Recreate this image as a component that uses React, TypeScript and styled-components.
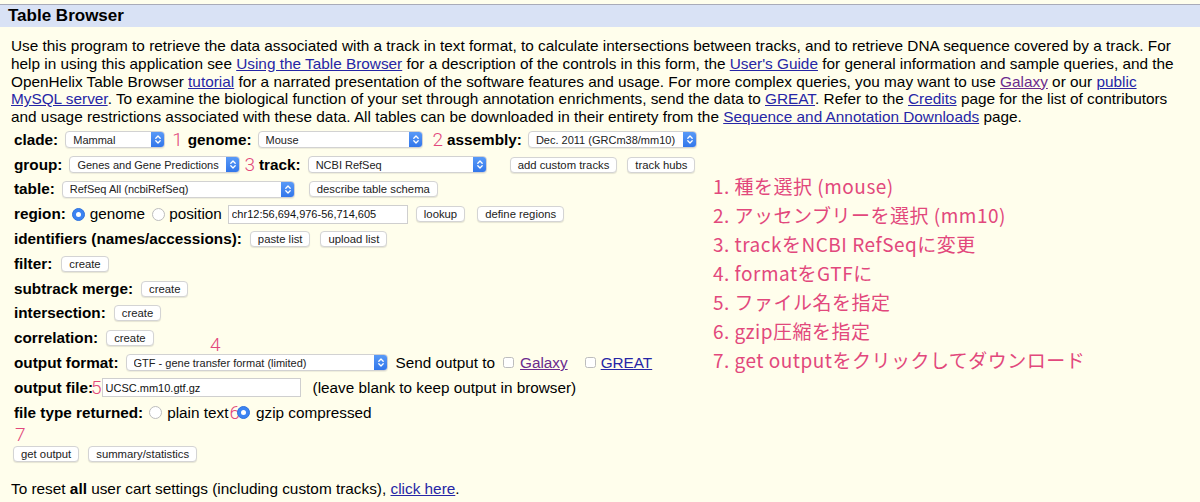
import React from 'react';
import styled, { createGlobalStyle } from 'styled-components';

const Global = createGlobalStyle`
  html, body { margin: 0; padding: 0; background: #fffeec; }
  body { font-family: "Liberation Sans", Arial, Helvetica, sans-serif; color: #000; }
`;

const Page = styled.div`
  width: 1200px;
  height: 502px;
  overflow: hidden;
  background: #fffeec;
`;

const TopRule = styled.div`
  height: 4px;
  border-bottom: 1px solid #a9abb8;
`;

const TitleBar = styled.div`
  height: 22px;
  background: #d9e2f5;
  display: flex;
  align-items: center;
  padding-left: 8px;
  font-weight: bold;
  font-size: 17px;
`;

const Intro = styled.div`
  margin-top: 10px;
  padding-left: 11px;
  font-size: 15.35px;
  line-height: 17.8px;
`;

const Line = styled.div`
  white-space: nowrap;
`;

const Link = styled.a<{ $visited?: boolean; $ml?: number }>`
  color: ${(p) => (p.$visited ? '#6a2b8e' : '#2626a6')};
  text-decoration: underline;
  margin-left: ${(p) => p.$ml ?? 0}px;
`;

const Main = styled.div`
  display: grid;
  grid-template-columns: 699px 1fr;
  padding-left: 14px;
  margin-top: 1.4px;
`;

const Form = styled.div`
  display: flex;
  flex-direction: column;
`;

const Row = styled.div<{ $h?: number }>`
  display: flex;
  align-items: center;
  height: ${(p) => p.$h ?? 24.8}px;
  white-space: nowrap;
  position: relative;
`;

const Label = styled.span<{ $ml?: number }>`
  font-weight: bold;
  font-size: 15.3px;
  margin-left: ${(p) => p.$ml ?? 0}px;
`;

const Text = styled.span<{ $ml?: number }>`
  font-size: 15.3px;
  margin-left: ${(p) => p.$ml ?? 0}px;
`;

const Num = styled.span<{ $ml?: number }>`
  color: #e2487c;
  font-family: Roboto, "Noto Sans", sans-serif;
  font-weight: 300;
  font-size: 19px;
  line-height: 20px;
  margin-left: ${(p) => p.$ml ?? 0}px;
`;

const FloatNum = styled(Num)`
  position: absolute;
  left: ${(p) => p.$ml ?? 0}px;
  top: -16px;
  margin-left: 0;
`;

const SelectBox = styled.div<{ $w: number; $ml?: number }>`
  width: ${(p) => p.$w}px;
  height: 17px;
  box-sizing: border-box;
  margin-left: ${(p) => p.$ml ?? 0}px;
  display: flex;
  align-items: center;
  background: #fff;
  border: 1px solid #d2d2d2;
  border-radius: 4px;
  box-shadow: 0 1px 1px rgba(0, 0, 0, 0.07);
  font-size: 11px;
  color: #222;
  padding-left: 7px;
  overflow: hidden;
`;

const SelectText = styled.span`
  flex: 1;
  overflow: hidden;
`;

const Chevron = styled.span`
  width: 14px;
  height: 17px;
  margin-right: -1px;
  background: linear-gradient(#5b9cf8, #2f74ea);
  border-radius: 0 4px 4px 0;
  display: flex;
  align-items: center;
  justify-content: center;
`;

const Btn = styled.button<{ $ml?: number }>`
  display: inline-flex;
  align-items: center;
  height: 16px;
  padding: 0 7px;
  margin: 0 0 0 ${(p) => p.$ml ?? 0}px;
  background: #fff;
  border: 1px solid #d4d4d4;
  border-radius: 4px;
  box-shadow: 0 1px 1px rgba(0, 0, 0, 0.1);
  font-family: "Liberation Sans", Arial, sans-serif;
  font-size: 11.3px;
  color: #222;
`;

const TextInput = styled.input<{ $w: number; $ml?: number }>`
  width: ${(p) => p.$w}px;
  height: 19px;
  box-sizing: border-box;
  margin: 0 0 0 ${(p) => p.$ml ?? 0}px;
  border: 1px solid #cfcfcf;
  background: #fff;
  font-family: "Liberation Sans", Arial, sans-serif;
  font-size: 11px;
  color: #111;
  padding: 0 3px;
  outline: none;
`;

const Radio = styled.span<{ $checked?: boolean; $ml?: number }>`
  width: 13px;
  height: 13px;
  box-sizing: border-box;
  border-radius: 50%;
  margin-left: ${(p) => p.$ml ?? 0}px;
  background: ${(p) => (p.$checked ? '#3b83f2' : '#fff')};
  border: 1px solid ${(p) => (p.$checked ? '#2f72dc' : '#bdbdbd')};
  display: inline-flex;
  align-items: center;
  justify-content: center;
  position: relative;
  &::after {
    content: '';
    width: 5px;
    height: 5px;
    border-radius: 50%;
    background: #fff;
    display: ${(p) => (p.$checked ? 'block' : 'none')};
  }
`;

const Check = styled.span<{ $ml?: number }>`
  width: 11px;
  height: 11px;
  box-sizing: border-box;
  border: 1px solid #bdbdbd;
  border-radius: 2.5px;
  background: #fff;
  margin-left: ${(p) => p.$ml ?? 0}px;
`;

const Notes = styled.ol`
  list-style: none;
  margin: 44px 0 0;
  padding: 0;
  color: #e2487c;
  font-family: "Noto Sans CJK JP", "Noto Sans", sans-serif;
  font-size: 19px;
  letter-spacing: 0.5px;
  line-height: 29px;
  white-space: nowrap;
`;

const Reset = styled.div`
  padding-left: 11px;
  margin-top: 17px;
  font-size: 15.35px;
  line-height: 18px;
  white-space: nowrap;
`;

const ChevronIcon = () => (
  <svg width="8" height="11" viewBox="0 0 8 11">
    <path
      d="M1.8 4.2 L4 2 L6.2 4.2 M1.8 6.8 L4 9 L6.2 6.8"
      stroke="#fff"
      strokeWidth="1.3"
      fill="none"
      strokeLinecap="round"
      strokeLinejoin="round"
    />
  </svg>
);

const Select = ({ w, ml, children }: { w: number; ml?: number; children: React.ReactNode }) => (
  <SelectBox $w={w} $ml={ml}>
    <SelectText>{children}</SelectText>
    <Chevron>
      <ChevronIcon />
    </Chevron>
  </SelectBox>
);

const notes = [
  '1. 種を選択 (mouse)',
  '2. アッセンブリーを選択 (mm10)',
  '3. trackをNCBI RefSeqに変更',
  '4. formatをGTFに',
  '5. ファイル名を指定',
  '6. gzip圧縮を指定',
  '7. get outputをクリックしてダウンロード',
];

export default function App() {
  return (
    <Page>
      <Global />
      <TopRule />
      <TitleBar>Table Browser</TitleBar>
      <Intro>
        <Line>
          Use this program to retrieve the data associated with a track in text format, to calculate intersections
          between tracks, and to retrieve DNA sequence covered by a track. For
        </Line>
        <Line>
          help in using this application see <Link href="#">Using the Table Browser</Link> for a description of the
          controls in this form, the <Link href="#">User's Guide</Link> for general information and sample queries, and
          the
        </Line>
        <Line>
          OpenHelix Table Browser <Link href="#">tutorial</Link> for a narrated presentation of the software features
          and usage. For more complex queries, you may want to use <Link href="#" $visited>Galaxy</Link> or our{' '}
          <Link href="#">public</Link>
        </Line>
        <Line>
          <Link href="#">MySQL server</Link>. To examine the biological function of your set through annotation
          enrichments, send the data to <Link href="#">GREAT</Link>. Refer to the <Link href="#">Credits</Link> page for
          the list of contributors
        </Line>
        <Line>
          and usage restrictions associated with these data. All tables can be downloaded in their entirety from the{' '}
          <Link href="#">Sequence and Annotation Downloads</Link> page.
        </Line>
      </Intro>
      <Main>
        <Form>
          <Row>
            <Label>clade:</Label>
            <Select w={100} ml={7}>Mammal</Select>
            <Num $ml={7}>1</Num>
            <Label $ml={5}>genome:</Label>
            <Select w={165} ml={6}>Mouse</Select>
            <Num $ml={10}>2</Num>
            <Label $ml={4}>assembly:</Label>
            <Select w={169} ml={6}>Dec. 2011 (GRCm38/mm10)</Select>
          </Row>
          <Row>
            <Label>group:</Label>
            <Select w={171} ml={7}>Genes and Gene Predictions</Select>
            <Num $ml={4}>3</Num>
            <Label $ml={4}>track:</Label>
            <Select w={179} ml={7}>NCBI RefSeq</Select>
            <Btn $ml={23}>add custom tracks</Btn>
            <Btn $ml={10}>track hubs</Btn>
          </Row>
          <Row>
            <Label>table:</Label>
            <Select w={233} ml={7}>RefSeq All (ncbiRefSeq)</Select>
            <Btn $ml={14}>describe table schema</Btn>
          </Row>
          <Row>
            <Label>region:</Label>
            <Radio $checked $ml={6} />
            <Text $ml={5}>genome</Text>
            <Radio $ml={7} />
            <Text $ml={4}>position</Text>
            <TextInput $w={180} $ml={6} readOnly value="chr12:56,694,976-56,714,605" />
            <Btn $ml={8}>lookup</Btn>
            <Btn $ml={12}>define regions</Btn>
          </Row>
          <Row>
            <Label>identifiers (names/accessions):</Label>
            <Btn $ml={8}>paste list</Btn>
            <Btn $ml={10}>upload list</Btn>
          </Row>
          <Row>
            <Label>filter:</Label>
            <Btn $ml={9}>create</Btn>
          </Row>
          <Row>
            <Label>subtrack merge:</Label>
            <Btn $ml={8}>create</Btn>
          </Row>
          <Row>
            <Label>intersection:</Label>
            <Btn $ml={8}>create</Btn>
          </Row>
          <Row>
            <Label>correlation:</Label>
            <Btn $ml={8}>create</Btn>
          </Row>
          <Row>
            <FloatNum $ml={196}>4</FloatNum>
            <Label>output format:</Label>
            <Select w={262} ml={7}>GTF - gene transfer format (limited)</Select>
            <Text $ml={8}>Send output to</Text>
            <Check $ml={8} />
            <Link href="#" $visited $ml={6} style={{ fontSize: 15.3 }}>
              Galaxy
            </Link>
            <Check $ml={17} />
            <Link href="#" $ml={5} style={{ fontSize: 15.3 }}>
              GREAT
            </Link>
          </Row>
          <Row>
            <Label>output file:</Label>
            <Num $ml={-2}>5</Num>
            <TextInput $w={199} $ml={0} readOnly value="UCSC.mm10.gtf.gz" />
            <Text $ml={12}>(leave blank to keep output in browser)</Text>
          </Row>
          <Row>
            <Label>file type returned:</Label>
            <Radio $ml={6} />
            <Text $ml={5}>plain text</Text>
            <Num $ml={1}>6</Num>
            <Radio $checked $ml={-3} />
            <Text $ml={6}>gzip compressed</Text>
          </Row>
          <Row $h={20}>
            <Num $ml={1}>7</Num>
          </Row>
          <Row $h={18}>
            <Btn $ml={-1}>get output</Btn>
            <Btn $ml={9}>summary/statistics</Btn>
          </Row>
        </Form>
        <Notes>
          {notes.map((n) => (
            <li key={n}>{n}</li>
          ))}
        </Notes>
      </Main>
      <Reset>
        To reset <b>all</b> user cart settings (including custom tracks), <Link href="#">click here</Link>.
      </Reset>
    </Page>
  );
}
